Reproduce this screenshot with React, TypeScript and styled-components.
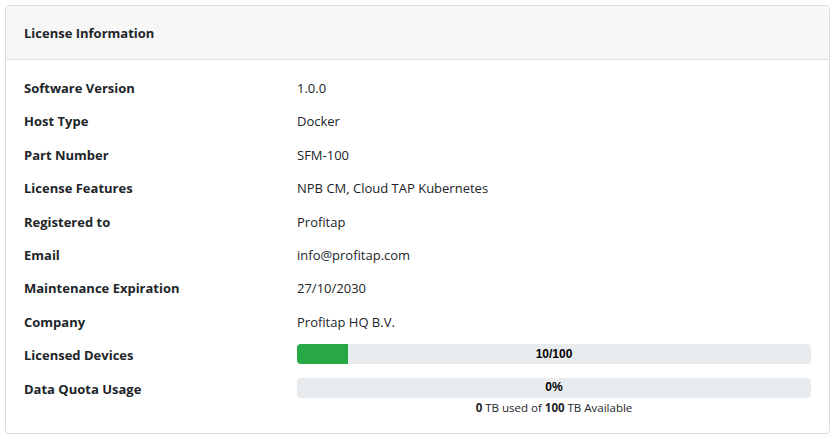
import styled, { createGlobalStyle } from "styled-components";

const GlobalStyle = createGlobalStyle`
  body {
    margin: 0;
    background: #ffffff;
    font-family: "Open Sans", "Noto Sans", sans-serif;
    color: #212529;
  }
`;

const rows: { label: string; value: string }[] = [
  { label: "Software Version", value: "1.0.0" },
  { label: "Host Type", value: "Docker" },
  { label: "Part Number", value: "SFM-100" },
  { label: "License Features", value: "NPB CM, Cloud TAP Kubernetes" },
  { label: "Registered to", value: "Profitap" },
  { label: "Email", value: "info@profitap.com" },
  { label: "Maintenance Expiration", value: "27/10/2030" },
  { label: "Company", value: "Profitap HQ B.V." },
];

const devices = { used: 10, total: 100 };
const quota = { used: 0, total: 100 };

const App = () => {
  const devicePct = (devices.used / devices.total) * 100;
  const quotaPct = (quota.used / quota.total) * 100;
  return (
    <>
      <GlobalStyle />
      <Page>
        <Card>
          <CardHeader>License Information</CardHeader>
          <CardBody>
            {rows.map((r) => (
              <Row key={r.label}>
                <Label>{r.label}</Label>
                <Value>{r.value}</Value>
              </Row>
            ))}
            <Row>
              <Label>Licensed Devices</Label>
              <Value>
                <Progress>
                  <ProgressFill $color="#28a745" style={{ width: `${devicePct}%` }} />
                  <ProgressLabel>
                    {devices.used}/{devices.total}
                  </ProgressLabel>
                </Progress>
              </Value>
            </Row>
            <Row>
              <Label>Data Quota Usage</Label>
              <Value>
                <Progress>
                  <ProgressFill $color="#28a745" style={{ width: `${quotaPct}%` }} />
                  <ProgressLabel>{quotaPct}%</ProgressLabel>
                </Progress>
                <QuotaNote>
                  <b>{quota.used}</b> TB used of <b>{quota.total}</b> TB Available
                </QuotaNote>
              </Value>
            </Row>
          </CardBody>
        </Card>
      </Page>
    </>
  );
};
export default App;

const Page = styled.div`
  padding: 5px;
`;
const Card = styled.div`
  width: 825px;
  height: 429px;
  box-sizing: border-box;
  border: 1px solid #dcdcdc;
  border-radius: 4px;
  background: #ffffff;
  overflow: hidden;
`;
const CardHeader = styled.div`
  height: 54px;
  box-sizing: border-box;
  display: flex;
  align-items: center;
  padding: 0 18px;
  background: #f7f7f7;
  border-bottom: 1px solid #dfdfdf;
  font-size: 13px;
  font-weight: 700;
  color: #212529;
`;
const CardBody = styled.div`
  padding: 12px 18px 0 18px;
`;
const Row = styled.div`
  display: grid;
  grid-template-columns: 273px 1fr;
  align-items: start;
  min-height: 33.4px;
`;
const Label = styled.div`
  font-size: 13px;
  font-weight: 700;
  line-height: 33.4px;
`;
const Value = styled.div`
  font-size: 13px;
  line-height: 33.4px;
`;
const Progress = styled.div`
  position: relative;
  height: 20px;
  margin-top: 5px;
  border-radius: 4px;
  background: #e9ecef;
  overflow: hidden;
`;
const ProgressFill = styled.div<{ $color: string }>`
  height: 100%;
  background: ${(p) => p.$color};
`;
const ProgressLabel = styled.span`
  position: absolute;
  inset: 0;
  display: flex;
  align-items: center;
  justify-content: center;
  font-family: "Liberation Sans", Arial, sans-serif;
  font-size: 12px;
  font-weight: 700;
  color: #000000;
`;
const QuotaNote = styled.div`
  text-align: center;
  font-size: 11.5px;
  line-height: 19px;
  color: #212529;
  b {
    font-weight: 700;
  }
`;
